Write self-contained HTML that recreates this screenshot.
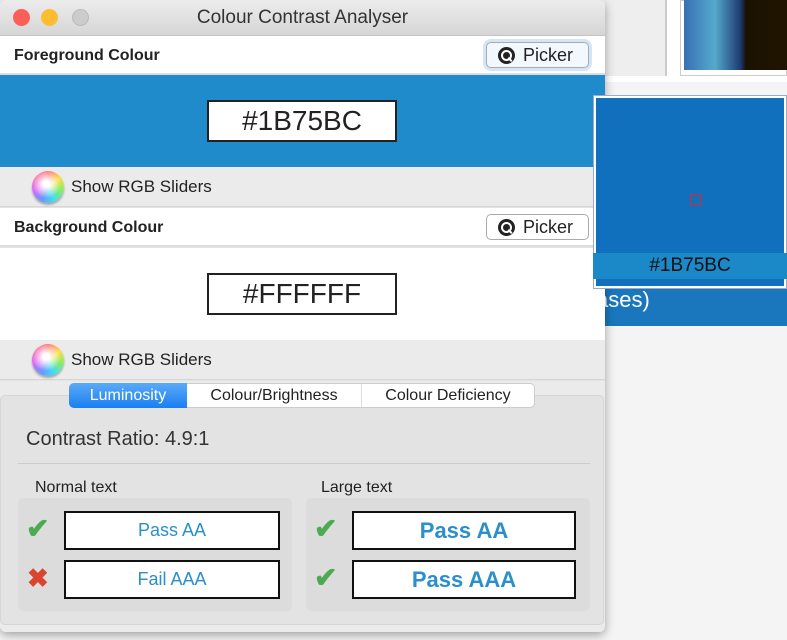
<!DOCTYPE html>
<html><head><style>
*{box-sizing:border-box;margin:0;padding:0}
body{width:787px;height:640px;overflow:hidden;background:#f4f4f4;font-family:"Liberation Sans",sans-serif;position:relative;color:#222}
.abs{position:absolute}
.hex{position:absolute;left:207px;width:190px;height:42px;border:2px solid #222;background:#fff;font-size:28px;text-align:center;line-height:38px;color:#222}
.sl{position:absolute;left:0;width:605px;height:40px;background:#ebebeb;border-bottom:1px solid #d6d6d6}
.sl .ball{position:absolute;left:32px;top:4px;width:32px;height:32px;border-radius:50%;background:radial-gradient(circle at 45% 40%,#fff 0,#fff 12%,transparent 55%),conic-gradient(#f66,#fd4,#8e6,#4de,#69f,#d6f,#f6a,#f66);box-shadow:0 2px 2px rgba(0,0,0,.3)}
.sl span{position:absolute;left:71px;top:10px;font-size:17px}
.hd{position:absolute;left:0;width:605px;height:39px;background:#fff;border-bottom:2px solid #ddd}
.hd b{position:absolute;left:14px;top:10px;font-size:16px}
.pk{position:absolute;left:486px;top:6px;width:103px;height:26px;border:1px solid #aaa;border-radius:5px;background:#fff;font-size:18px;line-height:24px;padding-left:36px}
.pk i{position:absolute;left:11px;top:4px;width:17px;height:17px;border-radius:50%;background:#222}
.pk i:before{content:"";position:absolute;left:3px;top:3px;width:7px;height:7px;border:2px solid #fff;border-radius:50%}
.pk i:after{content:"";position:absolute;left:11px;top:10px;width:2px;height:5px;background:#fff;transform:rotate(-45deg)}
.res{position:absolute;height:39px;border:2px solid #111;background:#fff;text-align:center;color:#2a8fca;line-height:35px}
.ck{position:absolute;color:#4caa50;font-size:28px;font-weight:bold}
</style></head><body>
<div class="abs" style="left:605px;top:0;width:182px;height:82px;background:#fff"></div>
<div class="abs" style="left:605px;top:0;width:62px;height:76px;background:#eee;border-right:2px solid #ccc"></div>
<div class="abs" style="left:680px;top:0;width:107px;height:76px;background:#fff;border:1px solid #ccc"></div>
<div class="abs" style="left:684px;top:0;width:103px;height:70px;background:linear-gradient(90deg,#3a6fb5 0,#5ac 30%,#1d3a70 55%,#1a1200 60%,#201500 100%)"></div>
<div class="abs" style="left:596px;top:289px;width:191px;height:37px;background:#1a77bd;color:#fff;font-size:22px"><span style="position:absolute;left:0;top:-2px">ases)</span></div>
<div class="abs" style="left:0;top:0;width:605px;height:632px;background:#e3e3e3;border-radius:6px;overflow:hidden;box-shadow:0 3px 10px rgba(0,0,0,.35)">
 <div class="abs" style="left:0;top:0;width:605px;height:36px;background:linear-gradient(#ececec,#d6d6d6);border-bottom:1px solid #c4c4c4;text-align:center;font-size:19px;line-height:36px;color:#333">Colour Contrast Analyser</div>
 <div class="abs" style="left:13px;top:9px;width:17px;height:17px;border-radius:50%;background:#fc5f57"></div>
 <div class="abs" style="left:41px;top:9px;width:17px;height:17px;border-radius:50%;background:#fdbd2f"></div>
 <div class="abs" style="left:72px;top:9px;width:17px;height:17px;border-radius:50%;background:#ccc;border:1px solid #bbb"></div>
 <div class="hd" style="top:36px"><b style="top:11px">Foreground Colour</b><div class="pk" style="box-shadow:0 0 0 3px #d3e5fb;background:#f3f8ff"><i></i>Picker</div></div>
 <div class="abs" style="left:0;top:75px;width:605px;height:92px;background:#1f8bca"></div>
 <div class="hex" style="top:100px">#1B75BC</div>
 <div class="sl" style="top:167px"><div class="ball"></div><span>Show RGB Sliders</span></div>
 <div class="hd" style="top:208px"><b style="top:11px">Background Colour</b><div class="pk"><i></i>Picker</div></div>
 <div class="abs" style="left:0;top:248px;width:605px;height:92px;background:#fff"></div>
 <div class="hex" style="top:273px">#FFFFFF</div>
 <div class="sl" style="top:340px"><div class="ball"></div><span>Show RGB Sliders</span></div>
 <div class="abs" style="left:0;top:381px;width:605px;height:251px;background:#ebebeb"></div>
 <div class="abs" style="left:0;top:395px;width:604px;height:230px;background:#e3e3e3;border:1px solid #d5d5d5;border-radius:5px"></div>
 <div class="abs" style="left:69px;top:383px;width:466px;height:25px;background:#fff;border:1px solid #ccc;border-radius:5px;font-size:16px;line-height:23px">
  <div class="abs" style="left:-1px;top:-1px;width:118px;height:25px;background:linear-gradient(#5aaaf8,#1a7ff0);color:#fff;text-align:center;line-height:25px;border-radius:5px 0 0 5px">Luminosity</div>
  <div class="abs" style="left:117px;top:0;width:175px;height:23px;text-align:center;border-right:1px solid #ddd">Colour/Brightness</div>
  <div class="abs" style="left:292px;top:0;width:172px;height:23px;text-align:center">Colour Deficiency</div>
 </div>
 <div class="abs" style="left:26px;top:428px;font-size:20px;color:#333">Contrast Ratio: 4.9:1</div>
 <div class="abs" style="left:18px;top:463px;width:572px;height:1px;background:#ccc"></div>
 <div class="abs" style="left:35px;top:479px;font-size:16px">Normal text</div>
 <div class="abs" style="left:321px;top:479px;font-size:16px">Large text</div>
 <div class="abs" style="left:18px;top:498px;width:274px;height:113px;background:#dcdcdc;border-radius:5px"></div>
 <div class="abs" style="left:306px;top:498px;width:284px;height:113px;background:#dcdcdc;border-radius:5px"></div>
 <div class="res" style="left:64px;top:511px;width:216px;font-size:18px">Pass AA</div>
 <div class="res" style="left:64px;top:560px;width:216px;font-size:18px">Fail AAA</div>
 <div class="res" style="left:352px;top:511px;width:224px;font-size:22px;font-weight:bold">Pass AA</div>
 <div class="res" style="left:352px;top:560px;width:224px;font-size:22px;font-weight:bold">Pass AAA</div>
 <div class="ck" style="left:26px;top:512px">✔</div>
 <div class="ck" style="left:27px;top:563px;color:#d9452f;font-size:26px">✖</div>
 <div class="ck" style="left:314px;top:512px">✔</div>
 <div class="ck" style="left:314px;top:561px">✔</div>
</div>
<div class="abs" style="left:593px;top:95px;width:194px;height:194px;background:#fff;border:1px solid #9ac"></div>
<div class="abs" style="left:596px;top:98px;width:188px;height:188px;background:#1070bd"></div>
<div class="abs" style="left:690px;top:194px;width:11px;height:11px;border:1px solid #e22"></div>
<div class="abs" style="left:593px;top:253px;width:194px;height:26px;background:#1b88c8;text-align:center;font-size:19px;line-height:26px;color:#111">#1B75BC</div>
</body></html>
